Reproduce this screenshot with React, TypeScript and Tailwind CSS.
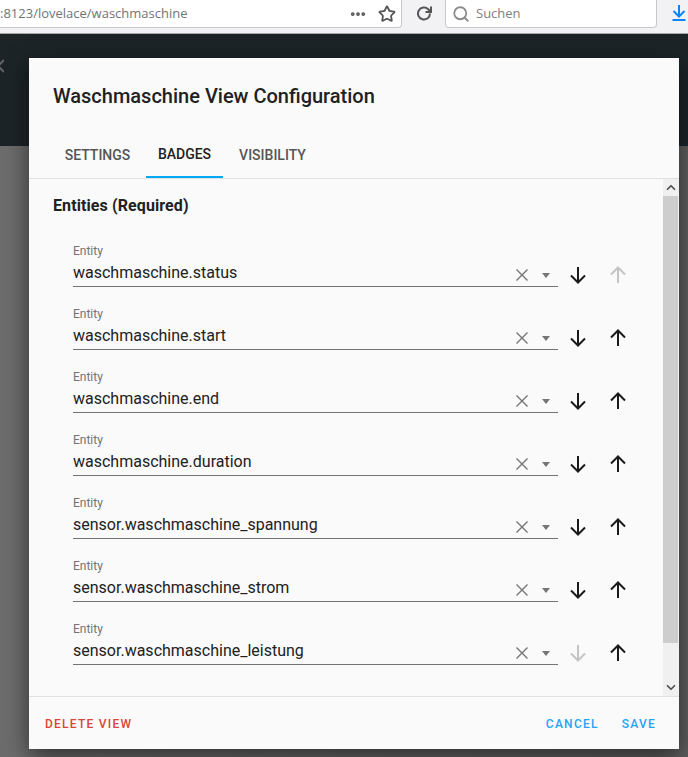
import { ChevronDown, ChevronUp, MoreHorizontal, Search, Star } from "lucide-react";

const entities = [
  "waschmaschine.status",
  "waschmaschine.start",
  "waschmaschine.end",
  "waschmaschine.duration",
  "sensor.waschmaschine_spannung",
  "sensor.waschmaschine_strom",
  "sensor.waschmaschine_leistung",
];

function Arrow({ up, disabled }: { up?: boolean; disabled?: boolean }) {
  return (
    <svg
      viewBox="0 0 24 24"
      className={`w-6 h-6 fill-none stroke-2 ${disabled ? "stroke-[#c4c4c4]" : "stroke-[#1a1a1a]"}`}
    >
      {up ? <path d="M12 20V5M5 11.5l7-7 7 7" /> : <path d="M12 4v15M5 12.5l7 7 7-7" />}
    </svg>
  );
}

function EntityRow({ name, index }: { name: string; index: number }) {
  return (
    <div className="flex h-[63px] items-start">
      <div className="w-[485px] pt-[6px]">
        <div className="text-xs leading-[15px] text-[#737373]">Entity</div>
        <div className="flex h-[28px] items-center border-b border-[#737373]">
          <span className="flex-1 text-base leading-6 text-[#212121]">{name}</span>
          <svg viewBox="0 0 12 12" className="mr-[14px] mt-[5px] w-3 h-3 fill-none stroke-[#757575] stroke-[1.4]">
            <path d="M0.5 0.5l11 11M11.5 0.5l-11 11" />
          </svg>
          <span className="mr-[8px] mt-[5px] h-0 w-0 border-x-4 border-t-[5px] border-x-transparent border-t-[#757575]" />
        </div>
      </div>
      <div className="ml-[8px] mt-[25px] flex gap-4">
        <Arrow disabled={index === entities.length - 1} />
        <Arrow up disabled={index === 0} />
      </div>
    </div>
  );
}

export default function App() {
  return (
    <div className="relative flex h-[757px] w-[688px] flex-col overflow-hidden bg-[#636363] font-['Roboto',sans-serif]">
      <div className="flex h-[34px] items-start border-b border-[#a8a8a8] bg-[#f2f2f4]">
        <div className="flex h-[28px] w-[402px] items-center rounded-br-sm border-r border-b border-[#c8c8c8] bg-white">
          <span className="flex-1 font-['Open_Sans',sans-serif] text-[13px] text-[#737373]">:8123/lovelace/waschmaschine</span>
          <MoreHorizontal className="mr-[11px] h-[18px] w-[18px] text-[#555]" strokeWidth={3} />
          <Star className="mr-[5px] h-[18px] w-[18px] text-[#555]" strokeWidth={2.4} />
        </div>
        <svg viewBox="0 0 16 16" className="ml-[14px] mt-[5px] h-4 w-4 fill-none stroke-[#555] stroke-2">
          <path d="M14 8.500a6 6 0 1 1-1.800-4.300L15 7" />
          <path d="M15 1.500V7h-5.500" />
        </svg>
        <div className="ml-[13px] flex h-[28px] w-[212px] items-center gap-[6px] rounded-b-sm border-x border-b border-[#c8c8c8] bg-white pl-[6px]">
          <Search className="h-[18px] w-[18px] text-[#8c8c8c]" strokeWidth={2.4} />
          <span className="font-['Open_Sans',sans-serif] text-[13px] text-[#808080]">Suchen</span>
        </div>
        <svg viewBox="0 0 14 16" className="ml-[15px] mt-[5px] h-4 w-[14px] fill-none stroke-[#0a84ff] stroke-2">
          <path d="M7 0v11M1.500 6l5.500 5.500 5.500-5.500M0.500 15h13" />
        </svg>
      </div>
      <div className="flex h-[112px] items-start bg-[#1c2428]">
        <svg viewBox="0 0 12 14" className="ml-[-8px] mt-[25px] h-[14px] w-3 fill-none stroke-[#5f6568] stroke-2">
          <path d="M0 1l12 12M12 1L0 13" />
        </svg>
      </div>
      <div className="flex-1 bg-gradient-to-r from-[#6c6c6c] to-[#5e5e5e]" />

      {/* dialog */}
      <div className="absolute left-[29px] top-[58px] flex h-[691px] w-[650px] flex-col bg-[#fafafa] shadow-[0_8px_22px_rgba(0,0,0,0.55)]">
        <h2 className="px-6 pt-6 text-xl leading-[28px] font-medium text-[#212121]">Waschmaschine View Configuration</h2>
        <div className="mt-[23px] flex h-[46px] border-b border-[#e0e0e0] pl-[20px] text-sm font-medium">
          <div className="flex w-[97px] items-center justify-center pb-[2px] text-[#555]">SETTINGS</div>
          <div className="flex w-[77px] items-center justify-center border-b-2 border-[#03a9f4] pb-[1px] text-[#212121]">BADGES</div>
          <div className="flex w-[99px] items-center justify-center pb-[2px] text-[#555]">VISIBILITY</div>
        </div>
        <div className="flex h-[518px] border-b border-[#e0e0e0]">
          <div className="flex-1 pl-6">
            <h3 className="pt-[17px] text-base leading-[20px] font-bold tracking-[0.1px] text-[#212121]">Entities (Required)</h3>
            <div className="mt-[22px] pl-5">
              {entities.map((name, i) => (
                <EntityRow key={name} name={name} index={i} />
              ))}
            </div>
          </div>
          <div className="flex w-[16px] flex-col items-center bg-[#f0f0f0] text-[#505050]">
            <ChevronUp className="h-[17px] w-[14px]" strokeWidth={3} />
            <div className="h-[447px] w-[15px] self-start bg-[#cdcdcd]" />
            <div className="flex-1" />
            <ChevronDown className="h-[17px] w-[14px]" strokeWidth={3} />
          </div>
        </div>
        <div className="flex flex-1 items-center justify-between px-4 pt-[2px] text-xs font-medium tracking-[1.25px]">
          <span className="text-[#db4437]">DELETE VIEW</span>
          <div className="flex gap-[23px] pr-[7px] text-[#1fa5f5]">
            <span>CANCEL</span>
            <span>SAVE</span>
          </div>
        </div>
      </div>
    </div>
  );
}
